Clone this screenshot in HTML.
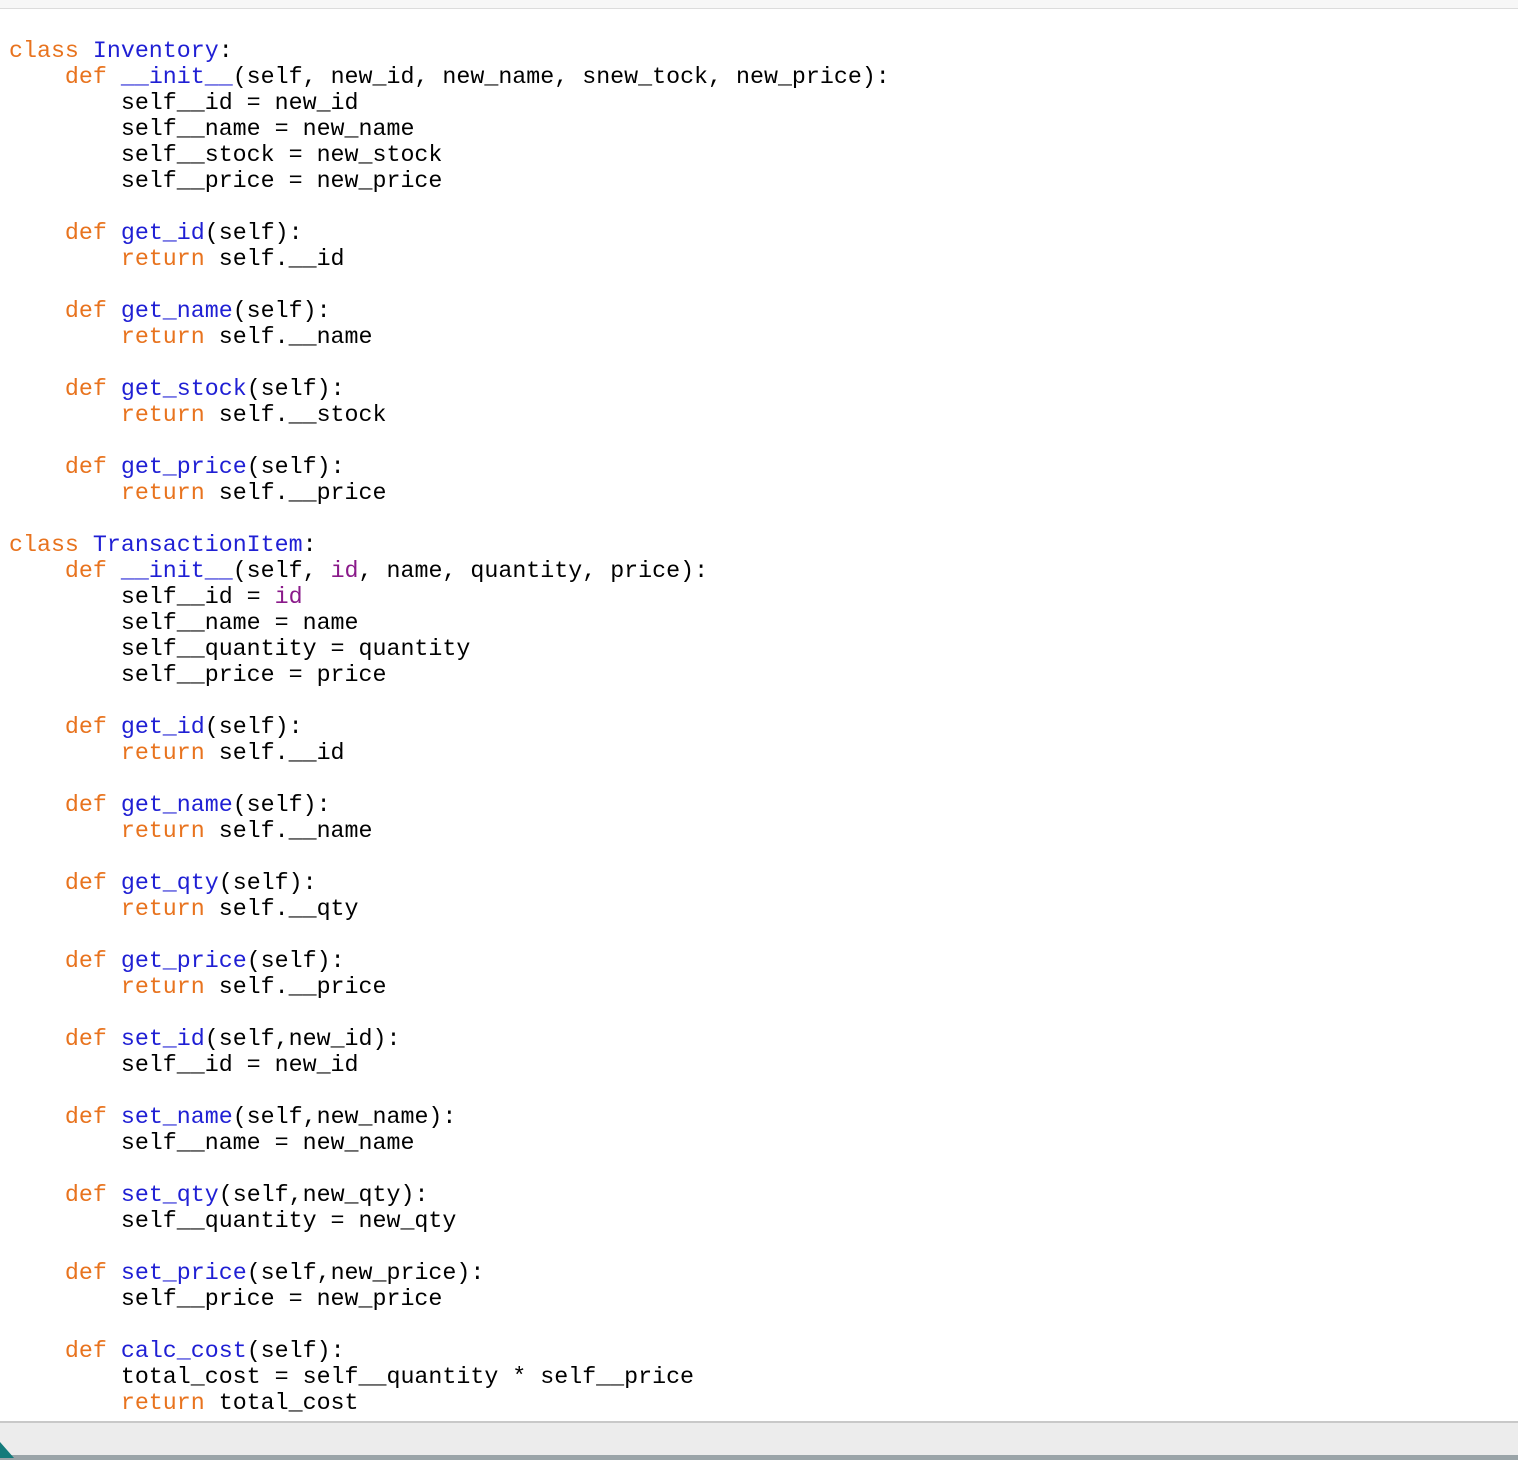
<!DOCTYPE html>
<html><head><meta charset="utf-8"><style>
html,body{margin:0;padding:0;width:1518px;height:1460px;overflow:hidden;background:#fff;}
.top{position:absolute;left:0;top:0;width:1518px;height:8px;background:#f7f7f7;border-bottom:1px solid #dcdcdc;}
pre{position:absolute;left:9px;top:38px;margin:0;font-family:"Liberation Mono",monospace;font-size:23.3px;line-height:26px;color:#000;}
.k{color:#e8731e}.f{color:#1f1fd4}.b{color:#8a1a8a}
.bot{position:absolute;left:0;top:1421px;width:1518px;height:34px;background:#ececec;border-top:2px solid #c8c8c8;}
.bl{position:absolute;left:0;top:1455px;width:1518px;height:5px;background:#9aa4a8;}
.tl{position:absolute;left:0;top:1442px;width:0;height:0;border-left:14px solid #137b7b;border-top:16px solid transparent;}
</style></head><body>
<div class="top"></div>
<pre><span class="k">class</span> <span class="f">Inventory</span>:
    <span class="k">def</span> <span class="f">__init__</span>(self, new_id, new_name, snew_tock, new_price):
        self__id = new_id
        self__name = new_name
        self__stock = new_stock
        self__price = new_price

    <span class="k">def</span> <span class="f">get_id</span>(self):
        <span class="k">return</span> self.__id

    <span class="k">def</span> <span class="f">get_name</span>(self):
        <span class="k">return</span> self.__name

    <span class="k">def</span> <span class="f">get_stock</span>(self):
        <span class="k">return</span> self.__stock

    <span class="k">def</span> <span class="f">get_price</span>(self):
        <span class="k">return</span> self.__price

<span class="k">class</span> <span class="f">TransactionItem</span>:
    <span class="k">def</span> <span class="f">__init__</span>(self, <span class="b">id</span>, name, quantity, price):
        self__id = <span class="b">id</span>
        self__name = name
        self__quantity = quantity
        self__price = price

    <span class="k">def</span> <span class="f">get_id</span>(self):
        <span class="k">return</span> self.__id

    <span class="k">def</span> <span class="f">get_name</span>(self):
        <span class="k">return</span> self.__name

    <span class="k">def</span> <span class="f">get_qty</span>(self):
        <span class="k">return</span> self.__qty

    <span class="k">def</span> <span class="f">get_price</span>(self):
        <span class="k">return</span> self.__price

    <span class="k">def</span> <span class="f">set_id</span>(self,new_id):
        self__id = new_id

    <span class="k">def</span> <span class="f">set_name</span>(self,new_name):
        self__name = new_name

    <span class="k">def</span> <span class="f">set_qty</span>(self,new_qty):
        self__quantity = new_qty

    <span class="k">def</span> <span class="f">set_price</span>(self,new_price):
        self__price = new_price

    <span class="k">def</span> <span class="f">calc_cost</span>(self):
        total_cost = self__quantity * self__price
        <span class="k">return</span> total_cost</pre>
<div class="bot"></div>
<div class="bl"></div>
<div class="tl"></div>
</body></html>
